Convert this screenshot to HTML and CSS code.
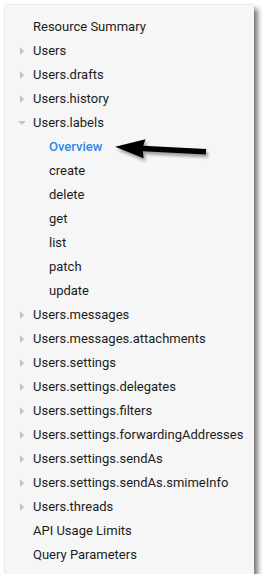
FILE: index.html
```html
<!DOCTYPE html>
<html lang="en">
<head>
    <meta charset="UTF-8">
    <meta name="viewport" content="width=device-width, initial-scale=1.0">
    <title>Gmail API reference nav</title>
    <link rel="stylesheet" href="styles.css">
</head>
<body>
    <div class="panel">
        <ul class="nav">
            <li class="item">Resource Summary</li>
            <li class="item closed">Users</li>
            <li class="item closed">Users.drafts</li>
            <li class="item closed">Users.history</li>
            <li class="item open">Users.labels</li>
            <li class="item sub active">Overview</li>
            <li class="item sub">create</li>
            <li class="item sub">delete</li>
            <li class="item sub">get</li>
            <li class="item sub">list</li>
            <li class="item sub">patch</li>
            <li class="item sub">update</li>
            <li class="item closed">Users.messages</li>
            <li class="item closed">Users.messages.attachments</li>
            <li class="item closed">Users.settings</li>
            <li class="item closed">Users.settings.delegates</li>
            <li class="item closed">Users.settings.filters</li>
            <li class="item closed">Users.settings.forwardingAddresses</li>
            <li class="item closed">Users.settings.sendAs</li>
            <li class="item closed">Users.settings.sendAs.smimeInfo</li>
            <li class="item closed">Users.threads</li>
            <li class="item">API Usage Limits</li>
            <li class="item">Query Parameters</li>
        </ul>

        <!-- callout arrow pointing at the current page -->
        <svg class="arrow" width="100" height="30" viewBox="0 0 100 30">
            <defs>
                <filter id="sh" x="-20%" y="-50%" width="140%" height="200%">
                    <feGaussianBlur stdDeviation="1.4"/>
                </filter>
            </defs>
            <g transform="translate(2 3) rotate(3 10 10)" fill="#777" filter="url(#sh)" opacity="0.7">
                <polygon points="5,8 35,-1 33,5.5 96,5.5 96,11 33,11 34,18"/>
            </g>
            <g transform="rotate(3 10 10)">
                <polygon points="5,8 35,-1 33,5.5 96,5.5 96,11 33,11 34,18" fill="#000"/>
            </g>
        </svg>
    </div>
</body>
</html>
```

FILE: styles.css
```css
html,body,ul,li{margin:0; padding:0;}
body{background:#fff; font-family: Roboto, "Noto Sans", Arial, sans-serif;}

.panel{
    position: relative;
    margin: 5px 0 0 5px;
    width: 249px; height: 569px;
    background: #f6f6f6;
    box-shadow: 0 0 2px rgba(0,0,0,.2), 4px 4px 5px rgba(0,0,0,.5);
}

.nav{list-style: none; padding-top: 10px;}
.item{
    position: relative;
    height: 24px; line-height: 24px;
    padding-left: 28px;
    font-size: 13px; color: #1c1c1c;
    white-space: nowrap;
}
.item.sub{padding-left: 44px;}
.item.active{color: #2d8ae6; font-weight: 500;}

/* little expand/collapse triangles */
.item.closed::before{
    content: ""; position: absolute;
    left: 15px; top: 8px;
    border-left: 4px solid #c4c4c4;
    border-top: 4px solid transparent;
    border-bottom: 4px solid transparent;
}
.item.open::before{
    content: ""; position: absolute;
    left: 13px; top: 10px;
    border-top: 4px solid #c4c4c4;
    border-left: 4px solid transparent;
    border-right: 4px solid transparent;
}

.arrow{position: absolute; left: 105px; top: 134px; overflow: visible;}
```
